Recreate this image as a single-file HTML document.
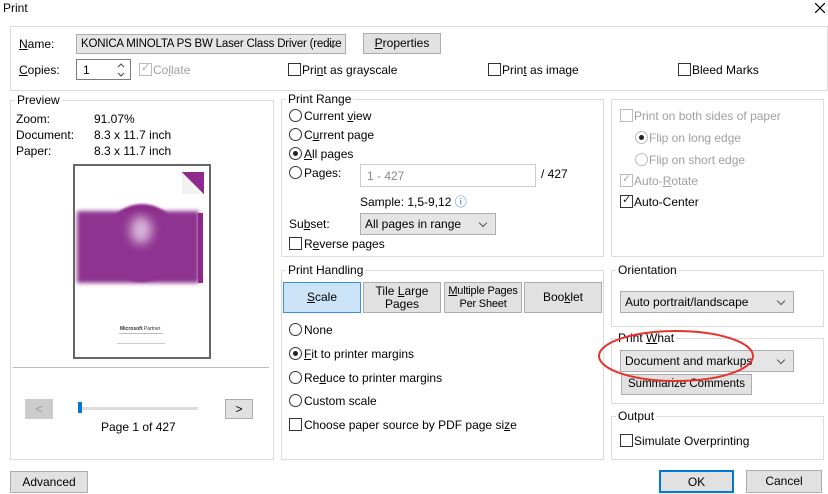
<!DOCTYPE html>
<html><head><style>
*{box-sizing:border-box;margin:0;padding:0}
body{width:828px;height:494px;background:#fff;font-family:"Liberation Sans",sans-serif;font-size:12px;color:#000;position:relative;overflow:hidden}
.a{position:absolute;white-space:nowrap}
.g{position:absolute;border:1px solid #dcdcdc}
.lg{position:absolute;background:#fff;padding:0 2px;top:-8px;left:4px}
.btn{position:absolute;background:#e1e1e1;border:1px solid #adadad;text-align:center;white-space:nowrap;overflow:hidden}
.sel{position:absolute;background:#e5e5e5;border:1px solid #adadad;padding-left:6px;white-space:nowrap;overflow:hidden}
.sel::after{content:"";position:absolute;right:9px;top:6px;width:5px;height:5px;border-right:1px solid #555;border-bottom:1px solid #555;transform:rotate(45deg)}
.cb{position:absolute;width:13px;height:13px;border:1px solid #333;background:#fff}
.rd{position:absolute;width:13px;height:13px;border:1px solid #333;border-radius:50%;background:#fff}
.rd.on::after{content:"";position:absolute;left:3px;top:3px;width:5px;height:5px;border-radius:50%;background:#222}
.dis{color:#a0a0a0}
.cb.dis,.rd.dis{border-color:#bbb}
u{text-decoration:underline}
</style></head><body>
<div class="a" style="left:3px;top:1px">Print</div>
<svg class="a" style="left:815px;top:3px" width="10" height="10"><path d="M0 0L10 10M10 0L0 10" stroke="#000" stroke-width="1.2"/></svg>

<div class="g" style="left:10px;top:26px;width:818px;height:65px"></div>
<div class="a" style="left:19px;top:37px"><u>N</u>ame:</div>
<div class="sel" style="left:76px;top:34px;width:270px;height:20px;line-height:18px;padding:0 20px 0 4px;font-size:11.5px;letter-spacing:-0.2px">KONICA MINOLTA PS BW Laser Class Driver (redire</div>
<div class="btn" style="left:363px;top:33px;width:78px;height:21px;line-height:19px"><u>P</u>roperties</div>
<div class="a" style="left:19px;top:63px"><u>C</u>opies:</div>
<div class="a" style="left:76px;top:59px;width:55px;height:21px;border:1px solid #7a7a7a;padding:3px 0 0 6px">1</div>
<svg class="a" style="left:117px;top:62px" width="8" height="16"><path d="M1 5L4 2L7 5M1 11L4 14L7 11" fill="none" stroke="#444"/></svg>
<div class="cb dis" style="left:139px;top:63px"><span style="position:absolute;left:1px;top:-3px;color:#aaa;font-size:11px">✓</span></div>
<div class="a dis" style="left:153px;top:63px">Co<u>l</u>late</div>
<div class="cb" style="left:288px;top:63px"></div><div class="a" style="left:302px;top:63px">Pri<u>n</u>t as grayscale</div>
<div class="cb" style="left:488px;top:63px"></div><div class="a" style="left:502px;top:63px">Prin<u>t</u> as image</div>
<div class="cb" style="left:678px;top:63px"></div><div class="a" style="left:692px;top:63px">Bleed Marks</div>

<div class="g" style="left:10px;top:100px;width:264px;height:360px"><div class="lg">Preview</div></div>
<div class="a" style="left:16px;top:112px">Zoom:</div><div class="a" style="left:94px;top:112px">91.07%</div>
<div class="a" style="left:16px;top:128px">Document:</div><div class="a" style="left:94px;top:128px">8.3 x 11.7 inch</div>
<div class="a" style="left:16px;top:144px">Paper:</div><div class="a" style="left:94px;top:144px">8.3 x 11.7 inch</div>
<div class="a" style="left:73px;top:164px;width:138px;height:195px;border:2px solid #666;background:#fff;overflow:hidden">
 <div class="a" style="left:107px;top:6px;width:22px;height:22px;background:linear-gradient(45deg,#f2f2f2 50%,#8e2b8c 50%)"></div>
 <div class="a" style="left:28px;top:38px;width:78px;height:78px;border-radius:50%;background:#8c2a8a;filter:blur(1px)"></div>
 <div class="a" style="left:2px;top:45px;width:122px;height:72px;background:#8e3390;filter:blur(2px)"></div>
 <div class="a" style="left:123px;top:47px;width:5px;height:70px;background:#8c2a8a"></div>
 <div class="a" style="left:55px;top:50px;width:22px;height:28px;border-radius:50%;background:#d8b4d8;filter:blur(5px)"></div>
 <div class="a" style="left:45px;top:160px;font-size:5px;font-weight:bold;color:#333">Microsoft <span style="font-weight:normal">Partner</span></div>
 <div class="a" style="left:44px;top:167px;width:44px;height:1px;background:#bbb"></div>
 <div class="a" style="left:42px;top:177px;width:48px;height:1px;background:#ccc"></div>
</div>
<div class="a" style="left:13px;top:367px;width:256px;height:1px;background:#bbb"></div>
<div class="btn" style="left:25px;top:399px;width:28px;height:20px;background:#ccc;border-color:#ccc;color:#999;line-height:18px">&lt;</div>
<div class="a" style="left:78px;top:407px;width:120px;height:3px;background:#ddd"></div>
<div class="a" style="left:78px;top:402px;width:4px;height:11px;background:#0078d7"></div>
<div class="btn" style="left:225px;top:399px;width:28px;height:20px;line-height:18px">&gt;</div>
<div class="a" style="left:101px;top:420px">Page 1 of 427</div>

<div class="g" style="left:281px;top:99px;width:323px;height:158px"><div class="lg">Print Range</div></div>
<div class="rd" style="left:289px;top:109px"></div><div class="a" style="left:304px;top:109px">Current <u>v</u>iew</div>
<div class="rd" style="left:289px;top:128px"></div><div class="a" style="left:304px;top:128px">C<u>u</u>rrent page</div>
<div class="rd on" style="left:289px;top:147px"></div><div class="a" style="left:304px;top:147px"><u>A</u>ll pages</div>
<div class="rd" style="left:289px;top:166px"></div><div class="a" style="left:304px;top:166px">Pa<u>g</u>es:</div>
<div class="a" style="left:360px;top:164px;width:176px;height:23px;border:1px solid #ccc;color:#888;padding:4px 0 0 6px">1 - 427</div>
<div class="a" style="left:541px;top:167px">/ 427</div>
<div class="a" style="left:360px;top:193px">Sample: 1,5-9,12 <span style="color:#1e6fc8">ⓘ</span></div>
<div class="a" style="left:289px;top:217px">Su<u>b</u>set:</div>
<div class="sel" style="left:360px;top:213px;width:136px;height:22px;line-height:20px;padding-left:4px">All pages in range</div>
<div class="cb" style="left:289px;top:237px"></div><div class="a" style="left:304px;top:237px">R<u>e</u>verse pages</div>

<div class="g" style="left:281px;top:270px;width:323px;height:190px"><div class="lg">Print Handling</div></div>
<div class="btn" style="left:283px;top:282px;width:78px;height:31px;line-height:29px;background:#cce4f7;border-color:#3c8fd7"><u>S</u>cale</div>
<div class="btn" style="left:363px;top:282px;width:78px;height:31px;line-height:13px;padding-top:2px">Tile <u>L</u>arge<br>Pages</div>
<div class="btn" style="left:444px;top:282px;width:78px;height:31px;line-height:13px;padding-top:2px;font-size:11px;letter-spacing:-0.2px"><u>M</u>ultiple Pages<br>Per Sheet</div>
<div class="btn" style="left:524px;top:282px;width:78px;height:31px;line-height:29px">Boo<u>k</u>let</div>
<div class="rd" style="left:289px;top:323px"></div><div class="a" style="left:304px;top:323px">None</div>
<div class="rd on" style="left:289px;top:347px"></div><div class="a" style="left:304px;top:347px"><u>F</u>it to printer margins</div>
<div class="rd" style="left:289px;top:371px"></div><div class="a" style="left:304px;top:371px">Re<u>d</u>uce to printer margins</div>
<div class="rd" style="left:289px;top:394px"></div><div class="a" style="left:304px;top:394px">Custom scale</div>
<div class="cb" style="left:289px;top:418px"></div><div class="a" style="left:304px;top:418px">Choose paper source by PDF page si<u>z</u>e</div>

<div class="g" style="left:611px;top:99px;width:213px;height:158px"></div>
<div class="cb dis" style="left:620px;top:109px"></div><div class="a dis" style="left:634px;top:109px">Print on both sides of paper</div>
<div class="rd dis on" style="left:635px;top:131px;border-color:#bbb"></div><div class="a dis" style="left:649px;top:131px">Flip on long edge</div>
<div class="rd dis" style="left:635px;top:153px"></div><div class="a dis" style="left:649px;top:153px">Flip on short edge</div>
<div class="cb dis" style="left:620px;top:174px"><span style="position:absolute;left:1px;top:-3px;color:#aaa;font-size:11px">✓</span></div><div class="a dis" style="left:634px;top:174px">Auto-<u>R</u>otate</div>
<div class="cb" style="left:620px;top:195px"><span style="position:absolute;left:1px;top:-3px;color:#222;font-size:11px">✓</span></div><div class="a" style="left:634px;top:195px">Auto-Center</div>

<div class="g" style="left:611px;top:270px;width:213px;height:57px"><div class="lg">Orientation</div></div>
<div class="sel" style="left:620px;top:291px;width:174px;height:22px;line-height:20px;padding-left:4px">Auto portrait/landscape</div>

<div class="g" style="left:611px;top:338px;width:213px;height:66px"><div class="lg">Print <u>W</u>hat</div></div>
<div class="sel" style="left:620px;top:350px;width:174px;height:22px;line-height:20px;padding-left:4px">Document and markups</div>
<div class="btn" style="left:621px;top:374px;width:131px;height:21px;line-height:19px;font-size:11.5px">Summarize Comments</div>

<div class="g" style="left:611px;top:416px;width:213px;height:44px"><div class="lg">Output</div></div>
<div class="cb" style="left:620px;top:434px"></div><div class="a" style="left:634px;top:434px">Simulate Overprinting</div>

<svg class="a" style="left:596px;top:326px" width="164" height="62"><ellipse cx="80" cy="30" rx="77" ry="25" fill="none" stroke="#e8322f" stroke-width="2"/></svg>

<div class="btn" style="left:10px;top:471px;width:78px;height:22px;line-height:20px">Advanced</div>
<div class="btn" style="left:659px;top:470px;width:75px;height:23px;line-height:20px;border:2px solid #0078d7">OK</div>
<div class="btn" style="left:746px;top:470px;width:76px;height:23px;line-height:21px">Cancel</div>
</body></html>
